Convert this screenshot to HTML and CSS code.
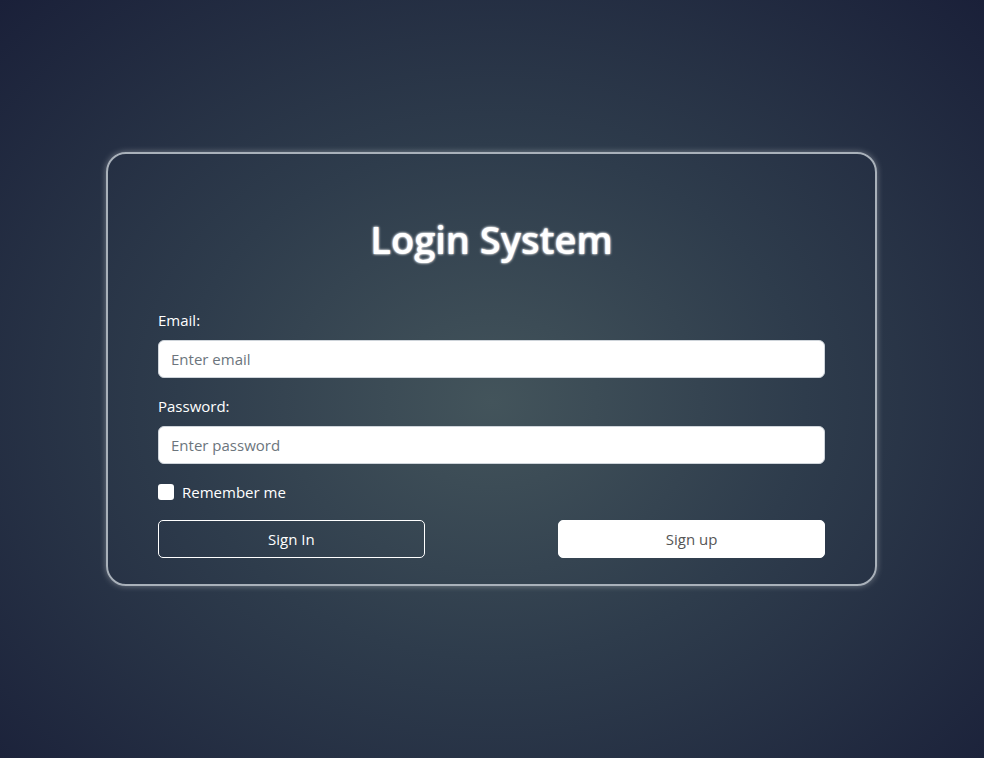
FILE: index.html
```html
<!DOCTYPE html>
<html lang="en">
<head>
    <meta charset="UTF-8">
    <title>Login System</title>
    <link rel="stylesheet" href="styles.css">
</head>
<body>
    <div class="wrap">
        <form class="login-box">
            <h1>Login System</h1>
            <div class="field">
                <label for="email">Email:</label>
                <input type="text" id="email" placeholder="Enter email">
            </div>
            <div class="field">
                <label for="pwd">Password:</label>
                <input type="password" id="pwd" placeholder="Enter password">
            </div>
            <div class="check">
                <span class="box"></span>
                <span>Remember me</span>
            </div>
            <div class="buttons">
                <button type="button" class="btn btn-outline">Sign In</button>
                <button type="button" class="btn btn-light">Sign up</button>
            </div>
        </form>
    </div>
</body>
</html>
```

FILE: styles.css
```css
* {
    margin: 0;
    padding: 0;
    box-sizing: border-box;
}
html, body {
    height: 100%;
}
body {
    font-family: "Open Sans", "Noto Sans", sans-serif;
    font-size: 15px;
    color: #fff;
    background: radial-gradient(ellipse at 50% 53%, #43545b 0%, #2e3c4c 45%, #1a2039 100%);
}
.wrap {
    height: 100%;
    display: flex;
    justify-content: center;
    padding: 152px 1px 0 0;
}
.login-box {
    width: 771px;
    height: 434px;
    border: 2px solid #a9b1ba;
    border-radius: 20px;
    box-shadow: 0 0 6px rgba(255, 255, 255, 0.35);
    padding: 57px 50px 0 50px;
}
.login-box h1 {
    text-align: center;
    font-size: 38px;
    font-weight: 600;
    line-height: 56px;
    text-shadow: 0 0 3px #fff, 0 0 2px rgba(255, 255, 255, 0.8);
    margin-bottom: 41px;
}
.field {
    margin-bottom: 16px;
}
.field label {
    display: block;
    line-height: 24px;
    margin-bottom: 8px;
}
.field input {
    display: block;
    width: 100%;
    height: 38px;
    border: 1px solid #ced4da;
    border-radius: 6px;
    padding: 0 12px;
    font-family: inherit;
    font-size: 15px;
    color: #212529;
    background-color: #fff;
}
.field input::placeholder {
    color: #6c757d;
}
.check {
    display: flex;
    align-items: center;
    gap: 8px;
    margin-top: 16px;
    line-height: 24px;
}
.check .box {
    width: 16px;
    height: 16px;
    background-color: #fff;
    border-radius: 3px;
}
.buttons {
    display: flex;
    justify-content: space-between;
    margin-top: 16px;
}
.btn {
    width: 40%;
    height: 38px;
    border-radius: 5px;
    font-family: inherit;
    font-size: 15px;
    cursor: pointer;
}
.btn-outline {
    background: transparent;
    border: 1px solid #fff;
    color: #fff;
}
.btn-light {
    background-color: #fff;
    border: 1px solid #fff;
    color: #555;
}
```
